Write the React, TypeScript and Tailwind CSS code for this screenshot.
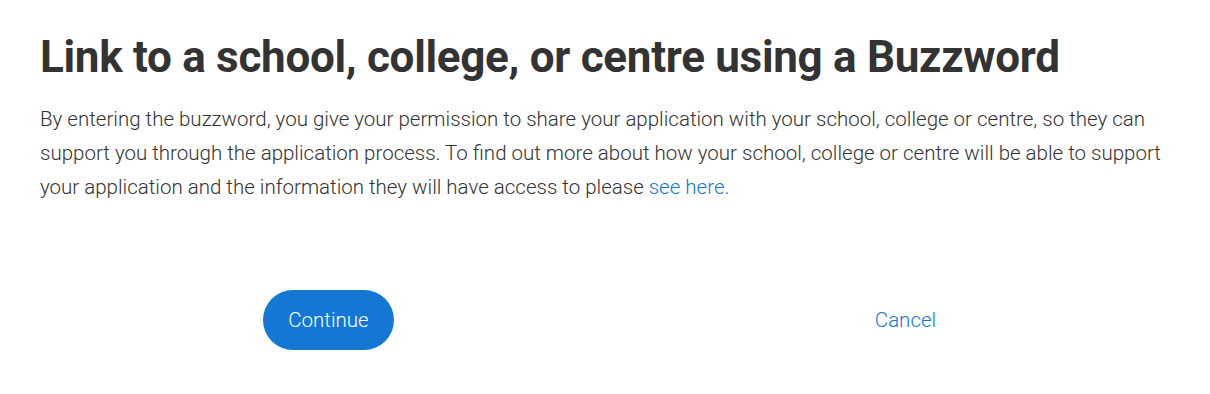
export default function App() {
  return (
    <div className="w-[1210px] h-[394px] bg-white font-['Roboto',sans-serif] text-[#333333]">
      <div className="pl-[40px] pr-[40px] pt-[31px]">
        <h1 className="text-[44px] leading-[52px] font-bold tracking-[-0.3px]">
          Link to a school, college, or centre using a Buzzword
        </h1>
        <p className="mt-[19px] text-[20.5px] leading-[34px] font-light text-[#333333]">
          By entering the buzzword, you give your permission to share your application with your school, college or centre, so they can
          support you through the application process. To find out more about how your school, college or centre will be able to support
          your application and the information they will have access to please <a href="#" className="text-[#1477d4]">see here.</a>
        </p>
      </div>
      <div className="grid grid-cols-2 pl-[40px] pr-[16px] mt-[86px]">
        <div className="flex justify-center">
          <button className="h-[60px] px-[25px] rounded-full bg-[#1477d4] text-white text-[20.5px] font-light">
            Continue
          </button>
        </div>
        <div className="flex justify-center items-center">
          <button className="text-[20.5px] text-[#1477d4] font-light">Cancel</button>
        </div>
      </div>
    </div>
  );
}
